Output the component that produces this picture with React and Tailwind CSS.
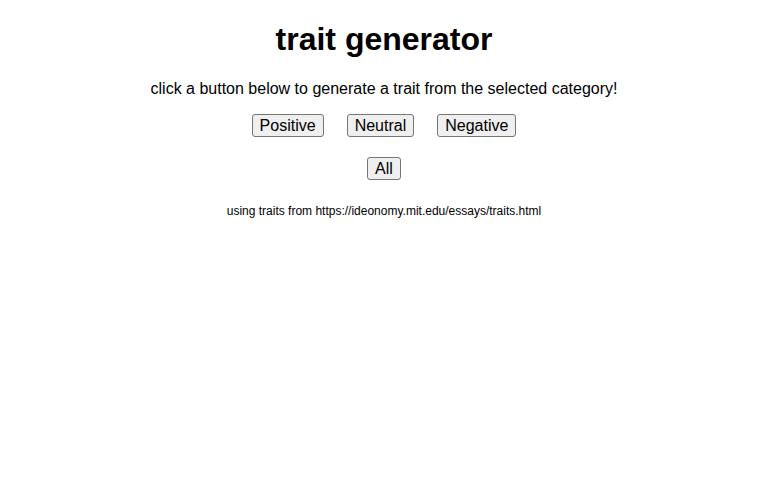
const categories = ['Positive', 'Neutral', 'Negative'];

function TraitButton({ label }) {
  return (
    <button className="h-[23px] px-[7px] text-[16px] leading-[19px] text-black bg-[#efefef] border border-[#767676] rounded-[3px]">
      {label}
    </button>
  );
}

export default function App() {
  return (
    <div className="min-h-[480px] bg-white text-black text-center font-['Liberation_Sans',Arial,sans-serif]">
      <h1 className="pt-[21px] text-[32px] leading-[37px] font-bold">trait generator</h1>
      <p className="mt-[22px] text-[16px] leading-[18px]">
        click a button below to generate a trait from the selected category!
      </p>
      <div className="mt-[16px] flex justify-center gap-[23px]">
        {categories.map((c) => (
          <TraitButton key={c} label={c} />
        ))}
      </div>
      <div className="mt-[20px] flex justify-center">
        <TraitButton label="All" />
      </div>
      <p className="mt-[24px] text-[12px] leading-[14px]">
        using traits from https://ideonomy.mit.edu/essays/traits.html
      </p>
    </div>
  );
}
